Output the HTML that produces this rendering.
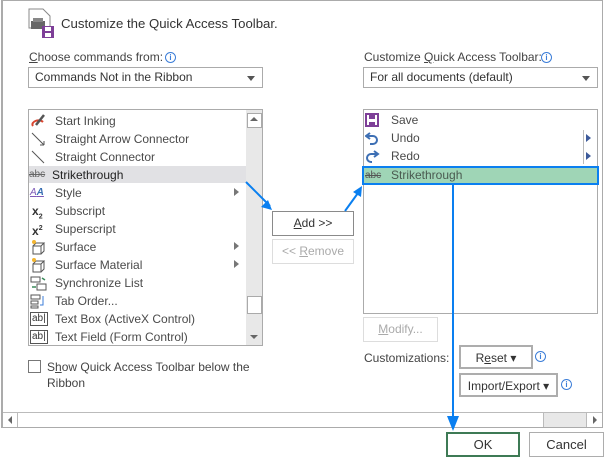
<!DOCTYPE html>
<html><head><meta charset="utf-8"><style>
*{box-sizing:border-box;margin:0;padding:0}
body{width:605px;height:458px;background:#fff;font-family:"Liberation Sans",sans-serif;font-size:12px;color:#444;position:relative;overflow:hidden}
.a{position:absolute}
.frame{left:1px;top:0;width:602px;height:428px;border:1px solid #ababab;border-left-width:2px}
.box{border:1px solid #ababab;background:#fff}
.sel{height:21px;border:1px solid #ababab;padding:2px 6px;color:#333}
.sel:after{content:"";position:absolute;right:7px;top:8px;border:4px solid transparent;border-top:5px solid #555}
.it{position:absolute;left:0;height:18px;line-height:18px;white-space:nowrap;color:#4a4a4a}
.it span{position:absolute;left:26px}
.rt{position:absolute;left:0;height:18px;line-height:18px;color:#4a4a4a}
.rt span{position:absolute;left:27px}
.tri{position:absolute;border:4px solid transparent;border-left:5px solid #777}
.btn{position:absolute;border:1px solid #adadad;background:#fff;text-align:center;color:#333}
.info{position:absolute;width:11px;height:11px;border:1px solid #3b7dd8;border-radius:50%;color:#3b7dd8;font-size:8px;line-height:9px;text-align:center;font-weight:bold}
u{text-decoration:underline}
</style></head><body>
<div class="a frame"></div>
<svg class="a" style="left:27px;top:8px" width="30" height="32"><path d="M2 1h14l7 7v12H2z" fill="#fff" stroke="#888"/><rect x="4" y="13" width="14" height="8" fill="#666"/><rect x="6" y="10" width="10" height="4" fill="#888"/><rect x="15" y="18" width="12" height="12" fill="#7e3f98"/><rect x="18" y="19" width="6" height="4" fill="#fff"/><rect x="18" y="25" width="6" height="4" fill="#fff"/></svg>
<div class="a" style="left:61px;top:16px;font-size:13.2px;color:#333">Customize the Quick Access Toolbar.</div>
<div class="a" style="left:29px;top:50px;color:#444"><u>C</u>hoose commands from:</div>
<div class="info" style="left:165px;top:52px">i</div>
<div class="a sel" style="left:28px;top:67px;width:235px">Commands Not in the Ribbon</div>
<div class="a box" style="left:28px;top:109px;width:235px;height:237px;overflow:hidden">
 <div class="a" style="left:0;top:56px;width:217px;height:17px;background:#e1e1e4"></div>
 <div class="it" style="top:2px"><svg class="a" style="left:1px;top:1px" width="18" height="16"><path d="M3 13c-3-4 6-8 10-4" stroke="#d9452f" fill="none" stroke-width="2"/><path d="M6 12L14 2" stroke="#555" stroke-width="2.5"/></svg><span>Start Inking</span></div>
 <div class="it" style="top:20px"><svg class="a" style="left:1px;top:1px" width="18" height="16"><path d="M2 2l12 12M14 14v-4M14 14h-4" stroke="#555" fill="none"/></svg><span>Straight Arrow Connector</span></div>
 <div class="it" style="top:38px"><svg class="a" style="left:1px;top:1px" width="18" height="16"><path d="M2 2l12 12" stroke="#555"/></svg><span>Straight Connector</span></div>
 <div class="it" style="top:56px;color:#222"><span style="left:0;font-size:10px;color:#666;text-decoration:line-through">abc</span><span style="left:23px">Strikethrough</span></div>
 <div class="it" style="top:74px"><span style="left:1px;font-size:10px;font-style:italic;color:#7e5ab8;text-decoration:underline">A<b style="color:#3a6fb4">A</b></span><span>Style</span></div>
 <div class="it" style="top:92px"><span style="left:3px;font-weight:bold;color:#333">x<sub style="font-size:7px">2</sub></span><span>Subscript</span></div>
 <div class="it" style="top:110px"><span style="left:3px;font-weight:bold;color:#333">x<sup style="font-size:7px">2</sup></span><span>Superscript</span></div>
 <div class="it" style="top:128px"><svg class="a" style="left:1px;top:1px" width="18" height="16"><path d="M3 7h8v8H3zM3 7l3-3h8l-3 3M14 4v8l-3 3" stroke="#555" fill="none"/><circle cx="4" cy="3" r="2" fill="#f2b530"/></svg><span>Surface</span></div>
 <div class="it" style="top:146px"><svg class="a" style="left:1px;top:1px" width="18" height="16"><path d="M3 7h8v8H3zM3 7l3-3h8l-3 3M14 4v8l-3 3" stroke="#555" fill="none"/><circle cx="4" cy="3" r="2" fill="#f2b530"/></svg><span>Surface Material</span></div>
 <div class="it" style="top:164px"><svg class="a" style="left:1px;top:1px" width="18" height="16"><path d="M1 2h9v5H1zM7 9h9v6H7z" stroke="#555" fill="none"/><path d="M12 3l3 2M2 12h4" stroke="#3a8a5a" stroke-width="1.5"/></svg><span>Synchronize List</span></div>
 <div class="it" style="top:182px"><svg class="a" style="left:1px;top:1px" width="18" height="16"><path d="M1 2h9v4H1zM1 8h7v3H1zM1 13h7v2H1z" stroke="#555" fill="none"/><path d="M13 3v9h-3" stroke="#3b7dd8" fill="none"/></svg><span>Tab Order...</span></div>
 <div class="it" style="top:200px"><span style="left:1px;font-size:10px;border:1px solid #555;line-height:12px;top:2px;padding:0 1px;color:#333">ab|</span><span>Text Box (ActiveX Control)</span></div>
 <div class="it" style="top:218px"><span style="left:1px;font-size:10px;border:1px solid #555;line-height:12px;top:2px;padding:0 1px;color:#333">ab|</span><span>Text Field (Form Control)</span></div>
 <div class="tri" style="left:205px;top:78px"></div>
 <div class="tri" style="left:205px;top:132px"></div>
 <div class="tri" style="left:205px;top:150px"></div>
 <div class="a" style="left:217px;top:0;width:17px;height:235px;background:#e8e8e8"></div>
 <div class="a" style="left:218px;top:3px;width:15px;height:15px;background:#fff;border:1px solid #aaa"></div>
 <div class="a" style="left:221px;top:7px;border:4px solid transparent;border-bottom:4px solid #666;border-top:0"></div>
 <div class="a" style="left:218px;top:186px;width:15px;height:18px;background:#fff;border:1px solid #aaa"></div>
 <div class="a" style="left:221px;top:225px;border:4px solid transparent;border-top:4px solid #666;border-bottom:0"></div>
</div>
<div class="a" style="left:28px;top:360px;width:13px;height:13px;border:1px solid #777"></div>
<div class="a" style="left:47px;top:359px;line-height:16px;color:#444">S<u>h</u>ow Quick Access Toolbar below the<br>Ribbon</div>
<div class="btn" style="left:272px;top:211px;width:82px;height:25px;line-height:23px;border-color:#8a8a8a"><u>A</u>dd &gt;&gt;</div>
<div class="btn" style="left:272px;top:239px;width:82px;height:25px;line-height:23px;color:#aaa;border-color:#ddd">&lt;&lt; <u>R</u>emove</div>
<div class="a" style="left:364px;top:50px;color:#444">Customize <u>Q</u>uick Access Toolbar:</div>
<div class="info" style="left:541px;top:52px">i</div>
<div class="a sel" style="left:363px;top:67px;width:235px">For all documents (default)</div>
<div class="a box" style="left:363px;top:109px;width:235px;height:205px">
 <div class="rt" style="top:1px"><svg class="a" style="left:1px;top:2px" width="16" height="14"><rect x="1" y="1" width="12" height="12" fill="none" stroke="#7e3f98" stroke-width="2"/><rect x="4" y="2" width="6" height="4" fill="#7e3f98"/><rect x="4" y="9" width="6" height="4" fill="#7e3f98"/></svg><span>Save</span></div>
 <div class="rt" style="top:19px"><svg class="a" style="left:1px;top:2px" width="16" height="14"><path d="M5 2L1 5l4 3" fill="none" stroke="#3d6fb4" stroke-width="2"/><path d="M2 5h6a4 4 0 010 8H5" fill="none" stroke="#3d6fb4" stroke-width="2"/></svg><span>Undo</span></div>
 <div class="rt" style="top:37px"><svg class="a" style="left:1px;top:2px" width="16" height="14"><path d="M9 2l4 3-4 3" fill="none" stroke="#3d6fb4" stroke-width="2"/><path d="M12 5H6a4 4 0 000 8h1" fill="none" stroke="#3d6fb4" stroke-width="2"/></svg><span>Redo</span></div>
 <div class="a" style="left:219px;top:20px;width:1px;height:34px;background:#bbb"></div>
 <div class="tri" style="left:222px;top:24px;border-left-color:#3d5a9a"></div>
 <div class="tri" style="left:222px;top:42px;border-left-color:#3d5a9a"></div>
</div>
<div class="a" style="left:362px;top:166px;width:237px;height:19px;background:#9fd5b6;border:2px solid #0a7ff0;line-height:15px;color:#4a5a50"><span style="position:absolute;left:1px;font-size:10px;text-decoration:line-through;color:#555">abc</span><span style="position:absolute;left:27px">Strikethrough</span></div>
<div class="btn" style="left:363px;top:317px;width:75px;height:25px;line-height:23px;color:#aaa;border-color:#ddd"><u>M</u>odify...</div>
<div class="a" style="left:364px;top:351px;color:#444">Customizations:</div>
<div class="btn" style="left:459px;top:345px;width:74px;height:24px;line-height:22px;border:2px solid #adadad">R<u>e</u>set &#9662;</div>
<div class="info" style="left:535px;top:351px">i</div>
<div class="btn" style="left:459px;top:373px;width:99px;height:24px;line-height:22px;border:2px solid #adadad">Import/Export &#9662;</div>
<div class="info" style="left:561px;top:379px">i</div>
<div class="a" style="left:3px;top:412px;width:599px;height:15px;border-top:1px solid #bbb;background:#fff"></div>
<div class="a" style="left:4px;top:413px;width:14px;height:14px;border-right:1px solid #bbb"></div>
<div class="a" style="left:8px;top:416px;border:4px solid transparent;border-right:4px solid #666;border-left:0"></div>
<div class="a" style="left:543px;top:413px;width:43px;height:14px;background:#e8e8e8;border-left:1px solid #bbb"></div>
<div class="a" style="left:586px;top:413px;width:16px;height:14px;border-left:1px solid #bbb"></div>
<div class="a" style="left:593px;top:416px;border:4px solid transparent;border-left:4px solid #666;border-right:0"></div>
<div class="btn" style="left:446px;top:432px;width:74px;height:25px;line-height:21px;border:2px solid #3e7a55;font-size:13px">OK</div>
<div class="btn" style="left:529px;top:432px;width:75px;height:25px;line-height:23px;font-size:13px">Cancel</div>
<svg class="a" style="left:0;top:0" width="605" height="458">
<path d="M246 182L270 206" stroke="#0a7ff0" stroke-width="2"/><path d="M272 210l-11-3 7-7z" fill="#0a7ff0"/>
<path d="M345 211L358 193" stroke="#0a7ff0" stroke-width="2"/><path d="M362 186l-1 11-8-5z" fill="#0a7ff0"/>
<path d="M453 184V420" stroke="#0a7ff0" stroke-width="2"/><path d="M447 416h12l-6 15z" fill="#0a7ff0"/>
</svg>
</body></html>
